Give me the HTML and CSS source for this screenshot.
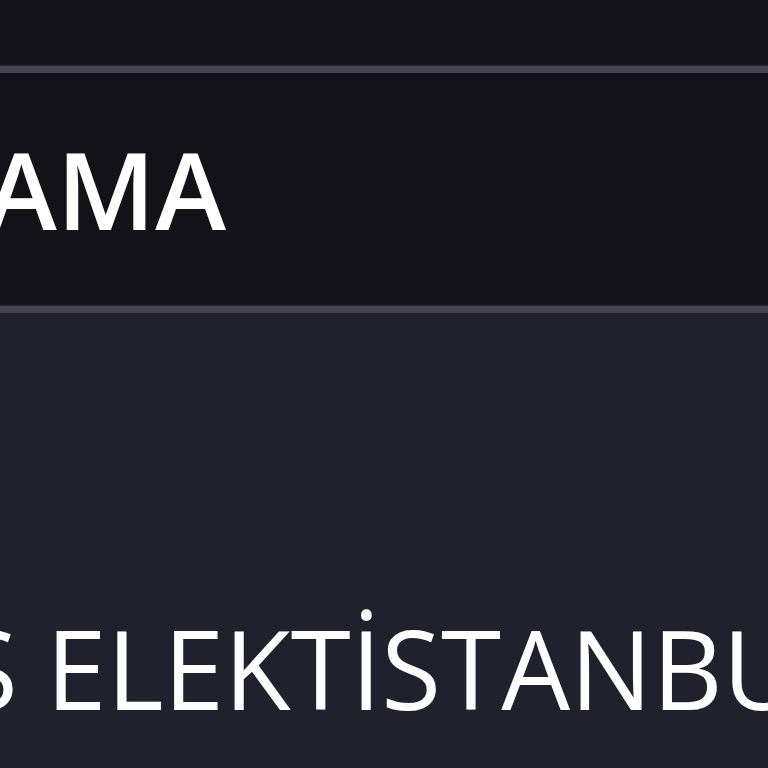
FILE: index.html
```html
<!DOCTYPE html>
<html lang="tr">
<head>
<meta charset="utf-8">
<link rel="stylesheet" href="styles.css">
</head>
<body>
<div class="page">
  <div class="topbar"></div>
  <div class="rule"></div>
  <div class="band">
    <div class="band-title">AMA</div>
  </div>
  <div class="rule rule-lower"></div>
  <div class="content">
    <div class="content-title">S ELEKTİSTANBUL</div>
  </div>
</div>
</body>
</html>
```

FILE: styles.css
```css
html, body {
  margin: 0;
  padding: 0;
  background: #14131c;
  width: 768px;
  height: 768px;
  overflow: hidden;
}
.page {
  display: flex;
  flex-direction: column;
  height: 768px;
  font-family: "Open Sans", "Noto Sans", sans-serif;
  color: #ffffff;
}
.topbar {
  height: 66px;
  flex: none;
  background: #14131c;
}
.rule {
  height: 7px;
  flex: none;
  background: #43424e;
  box-shadow: 0 0 2px 1px #2a2935;
}
.band {
  height: 233px;
  flex: none;
  background: #131219;
  overflow: hidden;
  padding-top: 59px;
  box-sizing: border-box;
  border-top: 3px solid #100f1c;
}
.band-title {
  font-size: 107px;
  font-weight: 600;
  line-height: 1;
  white-space: nowrap;
  margin-left: -14px;
}
.content {
  flex: 1;
  background: #1f222d;
  overflow: hidden;
  padding-top: 300px;
  box-sizing: border-box;
}
.content-title {
  font-size: 109px;
  font-weight: 400;
  line-height: 1;
  white-space: nowrap;
  margin-left: -42px;
}
```
